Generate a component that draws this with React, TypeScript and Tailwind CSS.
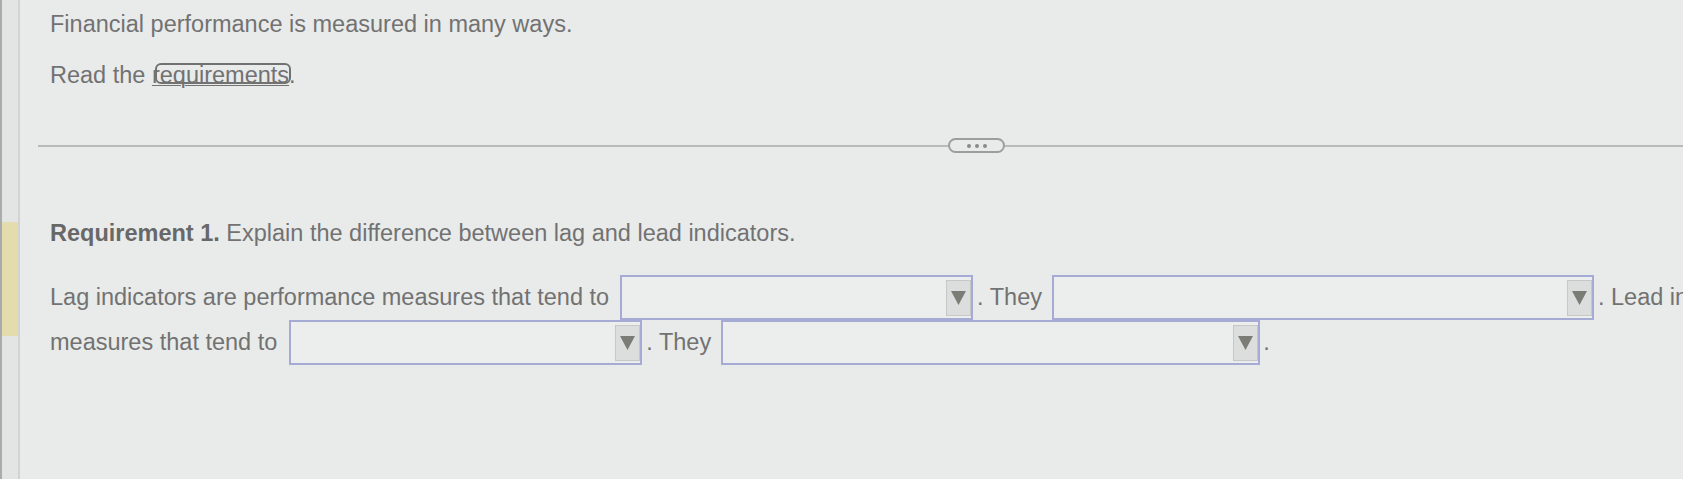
import { ReactNode } from 'react';

// Answer dropdown with the grey arrow button docked on the right edge
function AnswerSelect({ className }: { className: string }) {
	return (
		<div
			className={`flex h-[45px] shrink-0 items-center justify-end border-2 border-[#a6abd6] bg-[#eceeed] ${className}`}
		>
			<div className="flex h-[36px] w-[25px] items-center justify-center border border-[#c6c8c7] bg-[#dcdedd]">
				<svg width="15" height="14" viewBox="0 0 15 14">
					<path d="M0 0H15L7.5 14Z" fill="#7c7c77" />
				</svg>
			</div>
		</div>
	);
}

function Row({ children }: { children: ReactNode }) {
	return <div className="flex h-[45px] items-center whitespace-nowrap">{children}</div>;
}

export default function App() {
	return (
		<div className="flex h-[479px] w-[1683px] overflow-hidden bg-[#e9ebea] font-['Liberation_Sans',Arial,sans-serif] text-[23.5px] leading-[27px] text-[#727272]">
			{/* left gutter with the active-part marker */}
			<aside className="flex w-[20px] shrink-0 flex-col border-l-2 border-r-2 border-l-[#aaacab] border-r-[#d2d4d3] bg-[#e3e5e4]">
				<div className="h-[222px]" />
				<div className="h-[114px] bg-[#e5dcae]" />
			</aside>

			<main className="flex min-w-0 flex-1 flex-col">
				<p className="pl-[30px] pt-[11px]">Financial performance is measured in many ways.</p>
				<p className="mt-[24px] pl-[30px]">
					Read the{' '}
					<span className="relative underline decoration-1 underline-offset-2">
						requirements
						<span className="absolute bottom-[4px] left-[3px] right-[-2px] top-[1px] rounded-[6px] border-2 border-[#717171]" />
					</span>
					.
				</p>

				{/* collapsible divider */}
				<div className="ml-[18px] mt-[49px] flex h-[15px] items-center">
					<div className="h-[2px] w-[910px] bg-[#b9bbba]" />
					<button className="flex h-[15px] w-[57px] items-center justify-center gap-[4px] rounded-full border-2 border-[#9c9e9d] bg-[#e9ebea]">
						<span className="size-[4px] rounded-full bg-[#8a8c8b]" />
						<span className="size-[4px] rounded-full bg-[#8a8c8b]" />
						<span className="size-[4px] rounded-full bg-[#8a8c8b]" />
					</button>
					<div className="h-[2px] flex-1 bg-[#b9bbba]" />
				</div>

				<p className="mt-[67px] pl-[30px]">
					<span className="font-bold text-[#686868]">Requirement 1.</span> Explain the difference
					between lag and lead indicators.
				</p>

				<div className="mt-[28px] pl-[30px]">
					<Row>
						<span>Lag indicators are performance measures that tend to</span>
						<AnswerSelect className="ml-[11px] w-[353px]" />
						<span className="ml-[4px]">. They</span>
						<AnswerSelect className="ml-[10px] w-[542px]" />
						<span className="ml-[4px]">. Lead indicators are performance</span>
					</Row>
					<Row>
						<span>measures that tend to</span>
						<AnswerSelect className="ml-[12px] w-[353px]" />
						<span className="ml-[4px]">. They</span>
						<AnswerSelect className="ml-[10px] w-[539px]" />
						<span className="ml-[3px]">.</span>
					</Row>
				</div>
			</main>
		</div>
	);
}
